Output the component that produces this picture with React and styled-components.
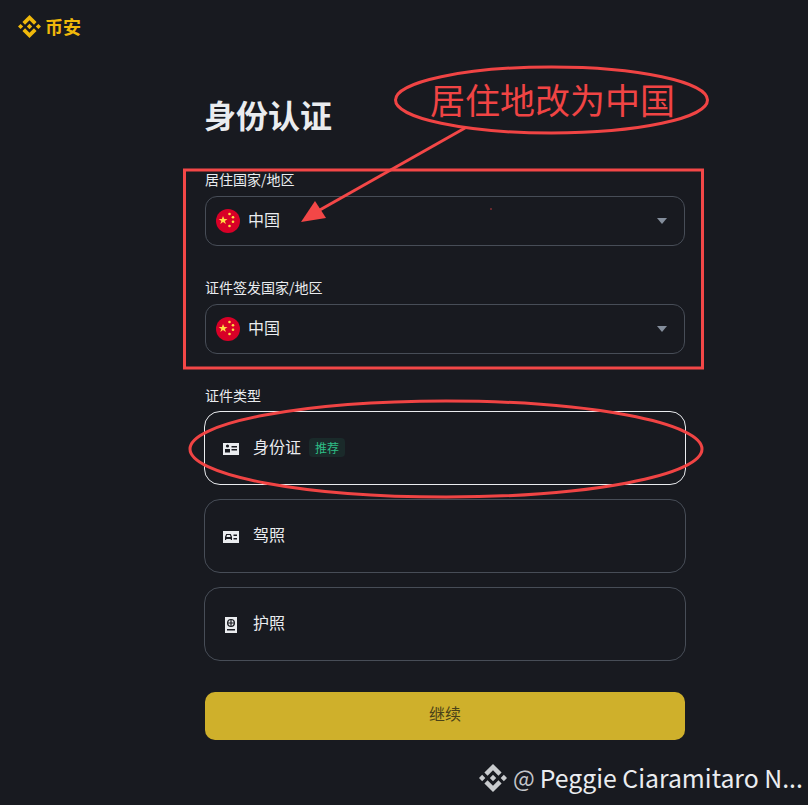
import React from "react";
import styled, { createGlobalStyle } from "styled-components";

const Global = createGlobalStyle`
  html, body { margin: 0; padding: 0; background: #181a20; }
  body { font-family: "Noto Sans CJK SC", "Noto Sans", sans-serif; color: #eaecef; }
  * { box-sizing: border-box; }
`;
const Page = styled.div`position: relative; width: 808px; height: 805px; overflow: hidden; background: #181a20;`;
const Header = styled.header`display: flex; align-items: center; gap: 4px; height: 52px; padding-left: 18px;`;
const BrandName = styled.span`font-size: 18px; font-weight: 700; color: #f0b90b; line-height: 1;`;
const Column = styled.main`display: flex; flex-direction: column; width: 480px; margin-left: 205px; padding-top: 41px;`;
const Title = styled.h1`margin: 0 0 39px -1px; font-size: 32px; line-height: 42px; font-weight: 700; color: #eaecef;`;
const Label = styled.div`font-size: 14px; line-height: 22px; height: 22px; color: #eaecef;`;
const TypeLabel = styled(Label)`margin-top: -6px;`;
const Field = styled.div`display: flex; flex-direction: column; gap: 6px; margin-bottom: 36px; margin-top: -6px;`;
const Select = styled.div`display: flex; align-items: center; gap: 8px; height: 50px; padding: 0 17px 0 10px; border: 1px solid #474d57; border-radius: 12px;`;
const SelectText = styled.span`flex: 1; font-size: 16px; line-height: 24px; padding-bottom: 4px; color: #eaecef;`;
const Caret = styled.span`width: 0; height: 0; margin-top: -1px; border-left: 5px solid transparent; border-right: 5px solid transparent; border-top: 6px solid #848e9c;`;
const TypeList = styled.div`display: flex; flex-direction: column; gap: 14px; margin: 5px -1px 31px;`;
const TypeCard = styled.div`display: flex; align-items: center; gap: 12px; height: 74px; padding: 0 16px; border: 1px solid ${p => p.$active ? "#eaecef" : "#474d57"}; border-radius: 16px;`;
const TypeIcon = styled.svg`width: 20px; height: 20px; fill: #eaecef; flex: none; margin-top: 2px;`;
const TypeName = styled.span`font-size: 16px; line-height: 24px; padding-bottom: 5px; color: #eaecef;`;
const Badge = styled.span`display: flex; align-items: center; height: 19px; padding: 0 6px 1px; margin: 0 0 1px -4px; border-radius: 4px; font-size: 12px; color: #2ebd85; background: rgba(46,189,133,.1);`;
const Continue = styled.button`height: 48px; padding: 0 0 6px; border: 0; border-radius: 10px; background: #cfb02b; color: #4a4218; font: 16px "Noto Sans CJK SC", sans-serif;`;
const Overlay = styled.svg`position: absolute; inset: 0; width: 808px; height: 805px; pointer-events: none;`;
const Note = styled.div`position: absolute; left: 430px; top: 74px; font-size: 35px; line-height: 50px; color: #f04444; white-space: nowrap;`;
const Watermark = styled.div`position: absolute; left: 479px; top: 763px; display: flex; align-items: center; gap: 6px; font: 24.8px/32px "Noto Sans CJK SC", "Noto Sans", sans-serif; color: #eaecef; white-space: nowrap;`;
const WatermarkText = styled.span`display: flex; align-items: center; gap: 5px; margin-top: -2px;`;
const At = styled.span`color: #c4c6ca; font-size: 23px;`;

const LOGO = "M38.73 53.2l24.59-24.58 24.6 24.6 14.3-14.31L63.32 0 24.42 38.9zM0 63.31l14.3-14.31 14.31 14.31-14.31 14.3zM38.73 73.41L63.32 98l24.6-24.6 14.31 14.29L63.32 126.61 24.41 87.7zM98 63.31l14.3-14.31 14.31 14.3-14.31 14.32zM77.83 63.3L63.32 48.78 52.59 59.51l-1.24 1.23-2.54 2.54 14.51 14.5 14.51-14.47z";

const Flag = () => (
  <svg width="24" height="24" viewBox="0 0 24 24">
    <circle cx="12" cy="12" r="12" fill="#d80027" />
    <path d="M7 7l1.3 3h3.2l-2.6 1.9 1 3.1-2.9-1.9-2.7 1.9 1-3.1-2.6-1.9h3.2z" fill="#ffda44" />
    <circle cx="13.5" cy="5" r="1.3" fill="#ffda44" /><circle cx="17" cy="8.2" r="1.3" fill="#ffda44" />
    <circle cx="17" cy="12.8" r="1.3" fill="#ffda44" /><circle cx="13.5" cy="17" r="1.3" fill="#ffda44" />
  </svg>
);

export default function App() {
  return (
    <Page>
      <Global />
      <Header>
        <svg width="23" height="23" viewBox="0 0 126.61 126.61" fill="#f0b90b"><path d={LOGO} /></svg>
        <BrandName>币安</BrandName>
      </Header>
      <Column>
        <Title>身份认证</Title>
        <Field>
          <Label>居住国家/地区</Label>
          <Select><Flag /><SelectText>中国</SelectText><Caret /></Select>
        </Field>
        <Field>
          <Label>证件签发国家/地区</Label>
          <Select><Flag /><SelectText>中国</SelectText><Caret /></Select>
        </Field>
        <TypeLabel>证件类型</TypeLabel>
        <TypeList>
          <TypeCard $active>
            <TypeIcon viewBox="0 0 20 20"><path fillRule="evenodd" d="M2 4h16v12H2zM6.5 5.4a1.6 1.6 0 100 3.2 1.6 1.6 0 000-3.2zM4 10v3.5h5V10zM10.5 7v1.5H16V7zM10.5 10v1.5H16V10z" /></TypeIcon>
            <TypeName>身份证</TypeName>
            <Badge>推荐</Badge>
          </TypeCard>
          <TypeCard>
            <TypeIcon viewBox="0 0 20 20"><path fillRule="evenodd" d="M2 4h16v12H2zM5.2 7L4 10v3h1.2v-1h4.6v1H11v-3L9.8 7zM6 8h3l.6 2H5.4zM12.5 7.5v1.5H16V7.5zM12.5 11v1.5H16V11z" /></TypeIcon>
            <TypeName>驾照</TypeName>
          </TypeCard>
          <TypeCard>
            <TypeIcon viewBox="0 0 20 20"><path fillRule="evenodd" d="M4 2h12v16H4zM10 4a4 4 0 100 8 4 4 0 000-8zM9.4 5v2.4H7.2A3 3 0 019.4 5zM10.6 5a3 3 0 012.2 2.4h-2.2zM7.2 8.6h2.2V11a3 3 0 01-2.2-2.4zM10.6 8.6h2.2A3 3 0 0110.6 11zM6 14v1.5h8V14z" /></TypeIcon>
            <TypeName>护照</TypeName>
          </TypeCard>
        </TypeList>
        <Continue>继续</Continue>
      </Column>

      <Overlay viewBox="0 0 808 805">
        <rect x="184.5" y="170" width="518" height="198" fill="none" stroke="#f34747" strokeWidth="3" />
        <ellipse cx="551.5" cy="100" rx="156" ry="33" fill="none" stroke="#f04444" strokeWidth="3" />
        <ellipse cx="446" cy="449" rx="256" ry="48" fill="none" stroke="#f04444" strokeWidth="3" />
        <path d="M465 128L318 211" stroke="#f34747" strokeWidth="3" />
        <path d="M301 222L315 201L326 218z" fill="#f34747" />
        <circle cx="491" cy="209" r="0.7" fill="#f04444" />
      </Overlay>
      <Note>居住地改为中国</Note>
      <Watermark>
        <svg width="28" height="28" viewBox="0 0 126.61 126.61" fill="#c9cbce"><path d={LOGO} /></svg>
        <WatermarkText><At>@</At><span>Peggie Ciaramitaro N...</span></WatermarkText>
      </Watermark>
    </Page>
  );
}
